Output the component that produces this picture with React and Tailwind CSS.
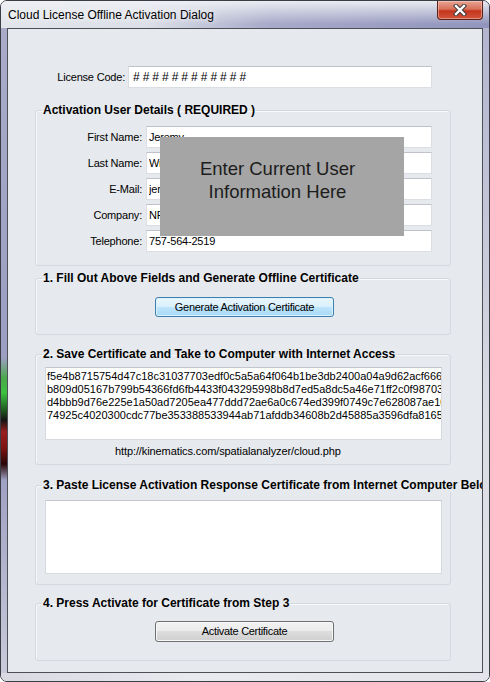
import React from "react";

const userFields = [
  { label: "First Name:", value: "Jeremy" },
  { label: "Last Name:", value: "Wright" },
  { label: "E-Mail:", value: "jeremy@kinematics.com" },
  { label: "Company:", value: "NRK" },
  { label: "Telephone:", value: "757-564-2519" },
];

const hexLines = [
  "f5e4b8715754d47c18c31037703edf0c5a5a64f064b1be3db2400a04a9d62acf666e2d4",
  "b809d05167b799b54366fd6fb4433f043295998b8d7ed5a8dc5a46e71ff2c0f98703e15",
  "d4bbb9d76e225e1a50ad7205ea477ddd72ae6a0c674ed399f0749c7e628087ae10c3a",
  "74925c4020300cdc77be353388533944ab71afddb34608b2d45885a3596dfa8165f07b",
];

// win7 style group box
const Group = ({ title, className, children }) => (
  <fieldset
    className={`ml-[27px] w-[416px] min-w-0 rounded-[3px] border border-[#d3d9df] shadow-[inset_1px_1px_0_#f7f8fa] ${className}`}
  >
    <legend className="ml-[6px] px-[1px] whitespace-nowrap text-[12px] leading-[14px] font-bold text-black">
      {title}
    </legend>
    {children}
  </fieldset>
);

const TextBox = ({ value, className }) => (
  <input
    readOnly
    value={value}
    className={`h-[22px] bg-white border border-[#dadee3] border-t-[#bfc3c9] px-[2px] text-[11px] tracking-[-0.2px] text-black outline-none ${className}`}
  />
);

const Button = ({ label, focused, className }) => (
  <button
    className={
      focused
        ? `block ml-[119px] w-[179px] h-[20px] rounded-[3px] border border-[#3c7fb1] bg-[linear-gradient(to_bottom,#eaf6fd_0%,#d9f0fc_50%,#bee6fd_50%,#a7d9f5_100%)] shadow-[inset_0_0_0_1px_#dff2fc] text-[11px] leading-[13px] tracking-[-0.3px] text-black ${className}`
        : `block ml-[119px] w-[179px] h-[21px] rounded-[3px] border border-[#707070] bg-[linear-gradient(to_bottom,#f2f2f2_0%,#ebebeb_50%,#dddddd_50%,#cfcfcf_100%)] shadow-[inset_0_0_0_1px_#f8f8f8] text-[11px] leading-[13px] tracking-[-0.3px] text-black ${className}`
    }
  >
    {label}
  </button>
);

const CloseButton = () => (
  <button className="mr-[6px] w-[46px] h-[19px] rounded-b-[4px] border border-t-0 border-[#5b2219] bg-[linear-gradient(to_bottom,#e8a493_0%,#d8705a_45%,#c4361c_55%,#d2553c_100%)] shadow-[inset_0_0_0_1px_rgba(255,220,210,0.45)] flex items-center justify-center">
    <svg width="14" height="12" viewBox="0 0 14 12">
      <path d="M3 2 L11 10 M11 2 L3 10" stroke="#3a3a3a" strokeWidth="4.4" strokeLinecap="square" />
      <path d="M3 2 L11 10 M11 2 L3 10" stroke="#ffffff" strokeWidth="2.4" strokeLinecap="square" />
    </svg>
  </button>
);

const App = () => {
  return (
    <div className="w-[490px] h-[682px] bg-white font-['Liberation_Sans',Arial,sans-serif]">
      <div className="flex flex-col h-full rounded-[7px] border border-[#3a3c46] overflow-hidden bg-[#e4e5ea]">
        {/* title bar */}
        <div className="h-[27px] flex justify-between items-start bg-[linear-gradient(to_bottom,rgba(238,240,244,0.95)_0%,rgba(238,240,244,0)_85%),linear-gradient(to_right,#e2e5eb_0%,#dcdfe7_30%,#a7aac9_55%,#9194bc_100%)]">
          <span className="pl-[7px] pt-[7px] text-[12px] leading-[14px] text-black [text-shadow:0_0_6px_#ffffff]">
            Cloud License Offline Activation Dialog
          </span>
          <CloseButton />
        </div>

        <div className="flex">
          <div className="w-[6px] bg-[linear-gradient(to_bottom,#a9abc9_0px,#9c9ec2_330px,#4aa84b_350px,#3cc13e_365px,#1f5a20_382px,#141414_392px,#9b1d1d_404px,#7d1212_420px,#2a0606_436px,#9fa1c3_452px,#c9cad9_645px)]" />

          {/* client area */}
          <div className="w-[476px] h-[645px] border border-[#4c4f56] bg-[#e6e9ed] flex flex-col overflow-hidden">
            <div className="mt-[37px] flex items-center">
              <span className="w-[117px] text-right text-[11px] tracking-[-0.2px] text-black">
                License Code:
              </span>
              <TextBox
                value="############"
                className="ml-[3px] w-[304px] !text-[12px] !tracking-[3px] pl-[4px]"
              />
            </div>

            <Group title="Activation User Details ( REQUIRED )" className="mt-[15px] h-[163px]">
              <div className="relative mt-[9px] flex flex-col gap-[4px]">
                {userFields.map((f) => (
                  <div key={f.label} className="flex items-center">
                    <span className="w-[106px] text-right text-[11px] tracking-[-0.2px] text-black">
                      {f.label}
                    </span>
                    <TextBox value={f.value} className="ml-[4px] w-[286px]" />
                  </div>
                ))}
                <div className="absolute left-[124px] top-[11px] w-[244px] h-[99px] bg-[#a5a5a5] pt-[20px] pr-[9px] text-center text-[18.5px] leading-[23px] text-[#1c1c1c]">
                  Enter Current User
                  <br />
                  Information Here
                </div>
              </div>
            </Group>

            <Group
              title="1. Fill Out Above Fields and Generate Offline Certificate"
              className="mt-[5px] h-[64px]"
            >
              <Button label="Generate Activation Certificate" focused className="mt-[12px]" />
            </Group>

            <Group
              title="2. Save Certificate and Take to Computer with Internet Access"
              className="mt-[12px] h-[118px]"
            >
              <textarea
                readOnly
                wrap="off"
                value={hexLines.join("\n")}
                className="block mt-[6px] ml-[9px] w-[397px] h-[73px] resize-none overflow-hidden bg-white border border-[#d6dadf] border-t-[#c3c7cd] pl-[1px] pt-[2px] text-[11px] leading-[13px] text-black outline-none"
              />
              <div className="mt-[5px] ml-[79px] text-[11px] leading-[13px] tracking-[-0.1px] text-black">
                http://kinematics.com/spatialanalyzer/cloud.php
              </div>
            </Group>

            <Group
              title="3. Paste License Activation Response Certificate from Internet Computer Below"
              className="mt-[13px] h-[107px]"
            >
              <textarea
                readOnly
                value=""
                className="block mt-[8px] ml-[9px] w-[397px] h-[74px] resize-none overflow-hidden bg-white border border-[#d6dadf] border-t-[#c3c7cd] outline-none"
              />
            </Group>

            <Group
              title="4. Press Activate for Certificate from Step 3"
              className="mt-[11px] h-[65px]"
            >
              <Button label="Activate Certificate" className="mt-[11px]" />
            </Group>
          </div>

          <div className="w-[6px] bg-[linear-gradient(to_bottom,#b3b5cf_0px,#c6c7d8_200px,#dcdde4_400px,#e2e3e8_645px)]" />
        </div>

        <div className="flex-1 bg-[linear-gradient(to_right,#d9dae2,#e9eaee_40%,#e4e5ea)]" />
      </div>
    </div>
  );
};

export default App;
